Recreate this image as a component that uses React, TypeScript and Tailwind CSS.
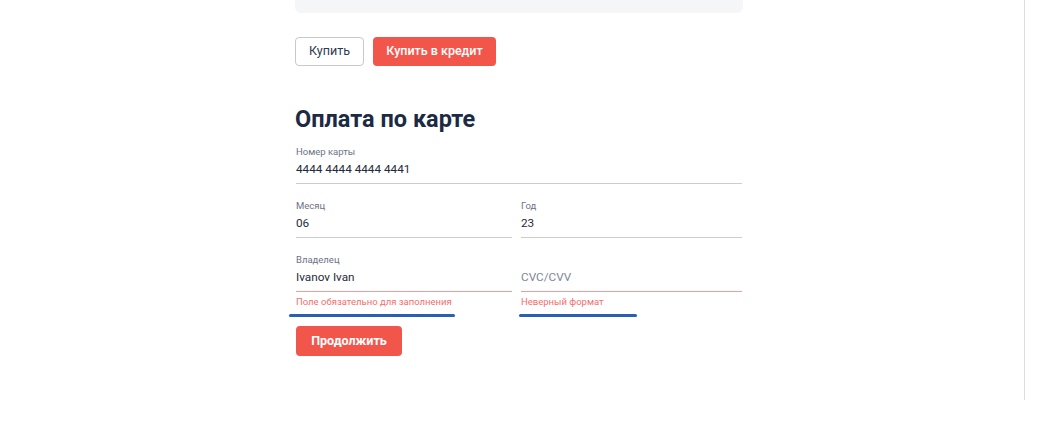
export default function App() {
  const font = { fontFamily: 'Roboto, "Open Sans", "Noto Sans", sans-serif' };

  return (
    <div className="h-[425px] w-[1039px] bg-white overflow-hidden" style={font}>
      <div className="h-[400px] w-[1025px] border-r border-[#dcdcdc] pl-[295px]">
        {/* top summary card (cut off) */}
        <div className="h-[13px] w-[448px] rounded-b-md bg-[#f5f6f8]" />

        {/* buy buttons */}
        <div className="mt-[24px] flex gap-[9px]">
          <button className="h-[29px] w-[69px] rounded border border-[#c5c9d0] bg-white text-[12.5px] text-[#2f3b52]">
            Купить
          </button>
          <button className="h-[29px] w-[123px] rounded bg-[#f2564b] text-[12.5px] font-medium text-white">
            Купить в кредит
          </button>
        </div>

        {/* card payment */}
        <h2 className="mt-[39px] text-[23.5px] font-bold leading-[28px] text-[#1c2b43]">Оплата по карте</h2>

        <div className="w-[447px] pl-[1px]">
          <Field label="Номер карты" value="4444 4444 4444 4441" className="mt-[13px]" />

          <div className="mt-[16px] grid grid-cols-[216px_1fr] gap-[9px]">
            <Field label="Месяц" value="06" />
            <Field label="Год" value="23" />
          </div>

          <div className="mt-[16px] grid grid-cols-[216px_1fr] gap-[9px]">
            <div>
              <Field label="Владелец" value="Ivanov Ivan" error />
              <p className="mt-[4px] text-[9.5px] leading-[12px] text-[#f36f6f]">Поле обязательно для заполнения</p>
              <div className="-ml-[7px] mt-[6px] h-[3px] w-[166px] rounded-full bg-[#2b5fb4]" />
            </div>
            <div>
              <Field label="" placeholder="CVC/CVV" error />
              <p className="mt-[4px] text-[9.5px] leading-[12px] text-[#f36f6f]">Неверный формат</p>
              <div className="-ml-[2px] mt-[6px] h-[3px] w-[118px] rounded-full bg-[#2b5fb4]" />
            </div>
          </div>

          <button className="mt-[9px] h-[30px] w-[106px] rounded bg-[#f2564b] text-[12.5px] font-bold text-white">
            Продолжить
          </button>
        </div>
      </div>
    </div>
  );
}

function Field({
  label,
  value,
  placeholder,
  error,
  className = '',
}: {
  label: string;
  value?: string;
  placeholder?: string;
  error?: boolean;
  className?: string;
}) {
  return (
    <div className={`pb-[6px] border-b ${error ? 'border-[#f49a9a]' : 'border-[#c9ccd3]'} ${className}`}>
      <div className="h-[12px] text-[9.5px] leading-[12px] text-[#6b7385]">{label}</div>
      <div className={`mt-[3px] text-[11.75px] leading-[16px] ${value ? 'text-[#1f2a3c]' : 'text-[#7e8797]'}`}>
        {value ?? placeholder}
      </div>
    </div>
  );
}
